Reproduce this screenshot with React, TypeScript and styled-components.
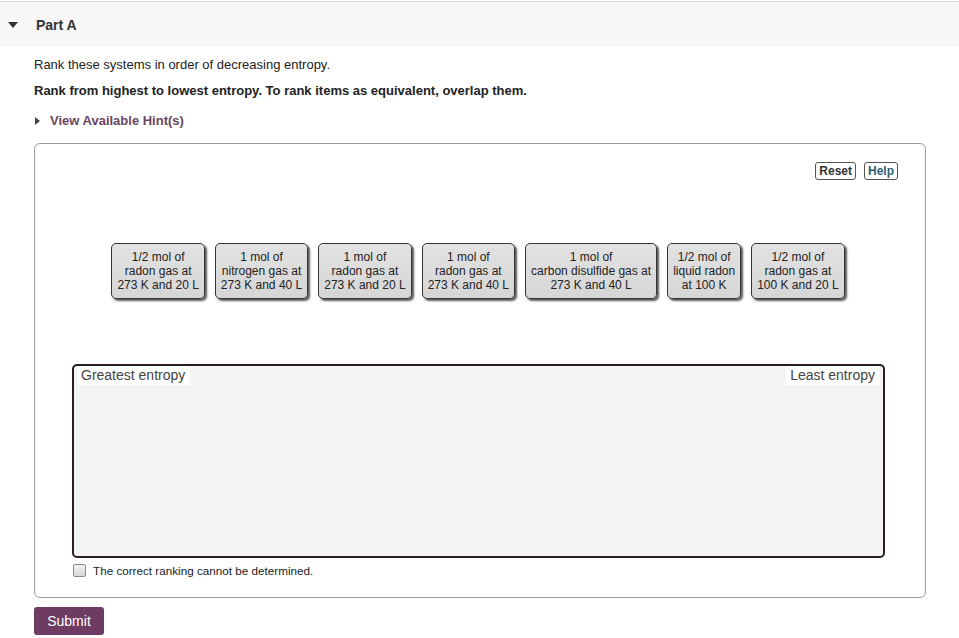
import React from 'react'
import styled, { createGlobalStyle } from 'styled-components'

const GlobalStyle = createGlobalStyle`
  body {
    margin: 0;
    background: #fff;
    font-family: 'Liberation Sans', Arial, sans-serif;
    color: #222;
  }
`

const Page = styled.main`
  width: 959px;
  padding-top: 1px;
`

const Header = styled.header`
  display: flex;
  align-items: center;
  height: 45px;
  border-top: 1px solid #dcdcdc;
  background: #f7f7f7;
  padding-left: 8px;
`

const Caret = styled.span<{ $dir: 'down' | 'right'; $color?: string }>`
  display: inline-block;
  width: 0;
  height: 0;
  ${({ $dir, $color = '#333' }) =>
    $dir === 'down'
      ? `border-left: 5px solid transparent;
         border-right: 5px solid transparent;
         border-top: 6px solid ${$color};`
      : `border-top: 4px solid transparent;
         border-bottom: 4px solid transparent;
         border-left: 5px solid ${$color};`}
`

const Title = styled.h2`
  margin: 0 0 0 18px;
  font-size: 14px;
  font-weight: 700;
  color: #333;
`

const Content = styled.section`
  padding: 10px 33px 0 34px;
`

const Prompt = styled.p<{ $bold?: boolean }>`
  margin: 0 0 10px;
  font-size: 13px;
  line-height: 16px;
  font-weight: ${({ $bold }) => ($bold ? 700 : 400)};
  color: #222;
`

const Hint = styled.div`
  display: flex;
  align-items: center;
  gap: 10px;
  margin: 14px 0 14px 1px;
  font-size: 13px;
  line-height: 16px;
  font-weight: 700;
  color: #6b4560;
`

const Panel = styled.div`
  border: 1px solid #9a9a9a;
  border-radius: 6px;
  height: 455px;
  padding: 18px 27px 0 37px;
  box-sizing: border-box;
`

const Toolbar = styled.div`
  display: flex;
  justify-content: flex-end;
  gap: 8px;
`

const ToolButton = styled.button<{ $color: string }>`
  height: 18px;
  padding: 0 3px;
  border: 1px solid #555;
  border-radius: 3px;
  background: #fff;
  font-family: 'Liberation Sans', Arial, sans-serif;
  font-size: 12px;
  font-weight: 700;
  color: ${({ $color }) => $color};
  line-height: 14px;
`

const Cards = styled.div`
  display: flex;
  justify-content: center;
  gap: 10px;
  margin: 63px -27px 0 -41px;
`

const Card = styled.div`
  padding: 6px 5px;
  border: 1px solid #333;
  border-radius: 5px;
  background: linear-gradient(#e2e2e2, #d6d6d6);
  box-shadow: 2px 2px 2px rgba(0, 0, 0, 0.65);
  font-size: 12px;
  line-height: 14px;
  text-align: center;
  white-space: nowrap;
  color: #222;
`

const RankBox = styled.div`
  display: flex;
  justify-content: space-between;
  align-items: flex-start;
  margin: 65px 13px 0 0;
  height: 194px;
  box-sizing: border-box;
  border: 2px solid #2b1e20;
  border-radius: 5px;
  background: #f4f4f4;
  padding: 0 3px;
`

const RankLabel = styled.span`
  background: #fff;
  padding: 0 5px 0 4px;
  font-size: 14px;
  line-height: 19px;
  color: #444;
`

const CheckRow = styled.label`
  display: flex;
  align-items: center;
  gap: 7px;
  margin: 6px 0 0 1px;
  font-size: 11.7px;
  color: #222;
`

const CheckBox = styled.span`
  width: 11px;
  height: 11px;
  border: 1px solid #8a8a8a;
  border-radius: 2px;
  background: linear-gradient(#f2f2f2, #d8d8d8);
`

const Submit = styled.button`
  margin-top: 9px;
  width: 70px;
  height: 28px;
  border: none;
  border-radius: 3px;
  background: #6e3b62;
  color: #fff;
  font-family: 'Liberation Sans', Arial, sans-serif;
  font-size: 14px;
`

const items = [
  ['1/2 mol of', 'radon gas at', '273 K and 20 L'],
  ['1 mol of', 'nitrogen gas at', '273 K and 40 L'],
  ['1 mol of', 'radon gas at', '273 K and 20 L'],
  ['1 mol of', 'radon gas at', '273 K and 40 L'],
  ['1 mol of', 'carbon disulfide gas at', '273 K and 40 L'],
  ['1/2 mol of', 'liquid radon', 'at 100 K'],
  ['1/2 mol of', 'radon gas at', '100 K and 20 L'],
]

const App: React.FC = () => (
  <Page>
    <GlobalStyle />
    <Header>
      <Caret $dir="down" />
      <Title>Part A</Title>
    </Header>
    <Content>
      <Prompt>Rank these systems in order of decreasing entropy.</Prompt>
      <Prompt $bold>Rank from highest to lowest entropy. To rank items as equivalent, overlap them.</Prompt>
      <Hint>
        <Caret $dir="right" $color="#444" />
        View Available Hint(s)
      </Hint>
      <Panel>
        <Toolbar>
          <ToolButton $color="#333">Reset</ToolButton>
          <ToolButton $color="#2f5f6f">Help</ToolButton>
        </Toolbar>
        <Cards>
          {items.map((lines, i) => (
            <Card key={i}>
              {lines.map((l) => (
                <div key={l}>{l}</div>
              ))}
            </Card>
          ))}
        </Cards>
        <RankBox>
          <RankLabel>Greatest entropy</RankLabel>
          <RankLabel>Least entropy</RankLabel>
        </RankBox>
        <CheckRow>
          <CheckBox />
          The correct ranking cannot be determined.
        </CheckRow>
      </Panel>
      <Submit>Submit</Submit>
    </Content>
  </Page>
)

export default App
